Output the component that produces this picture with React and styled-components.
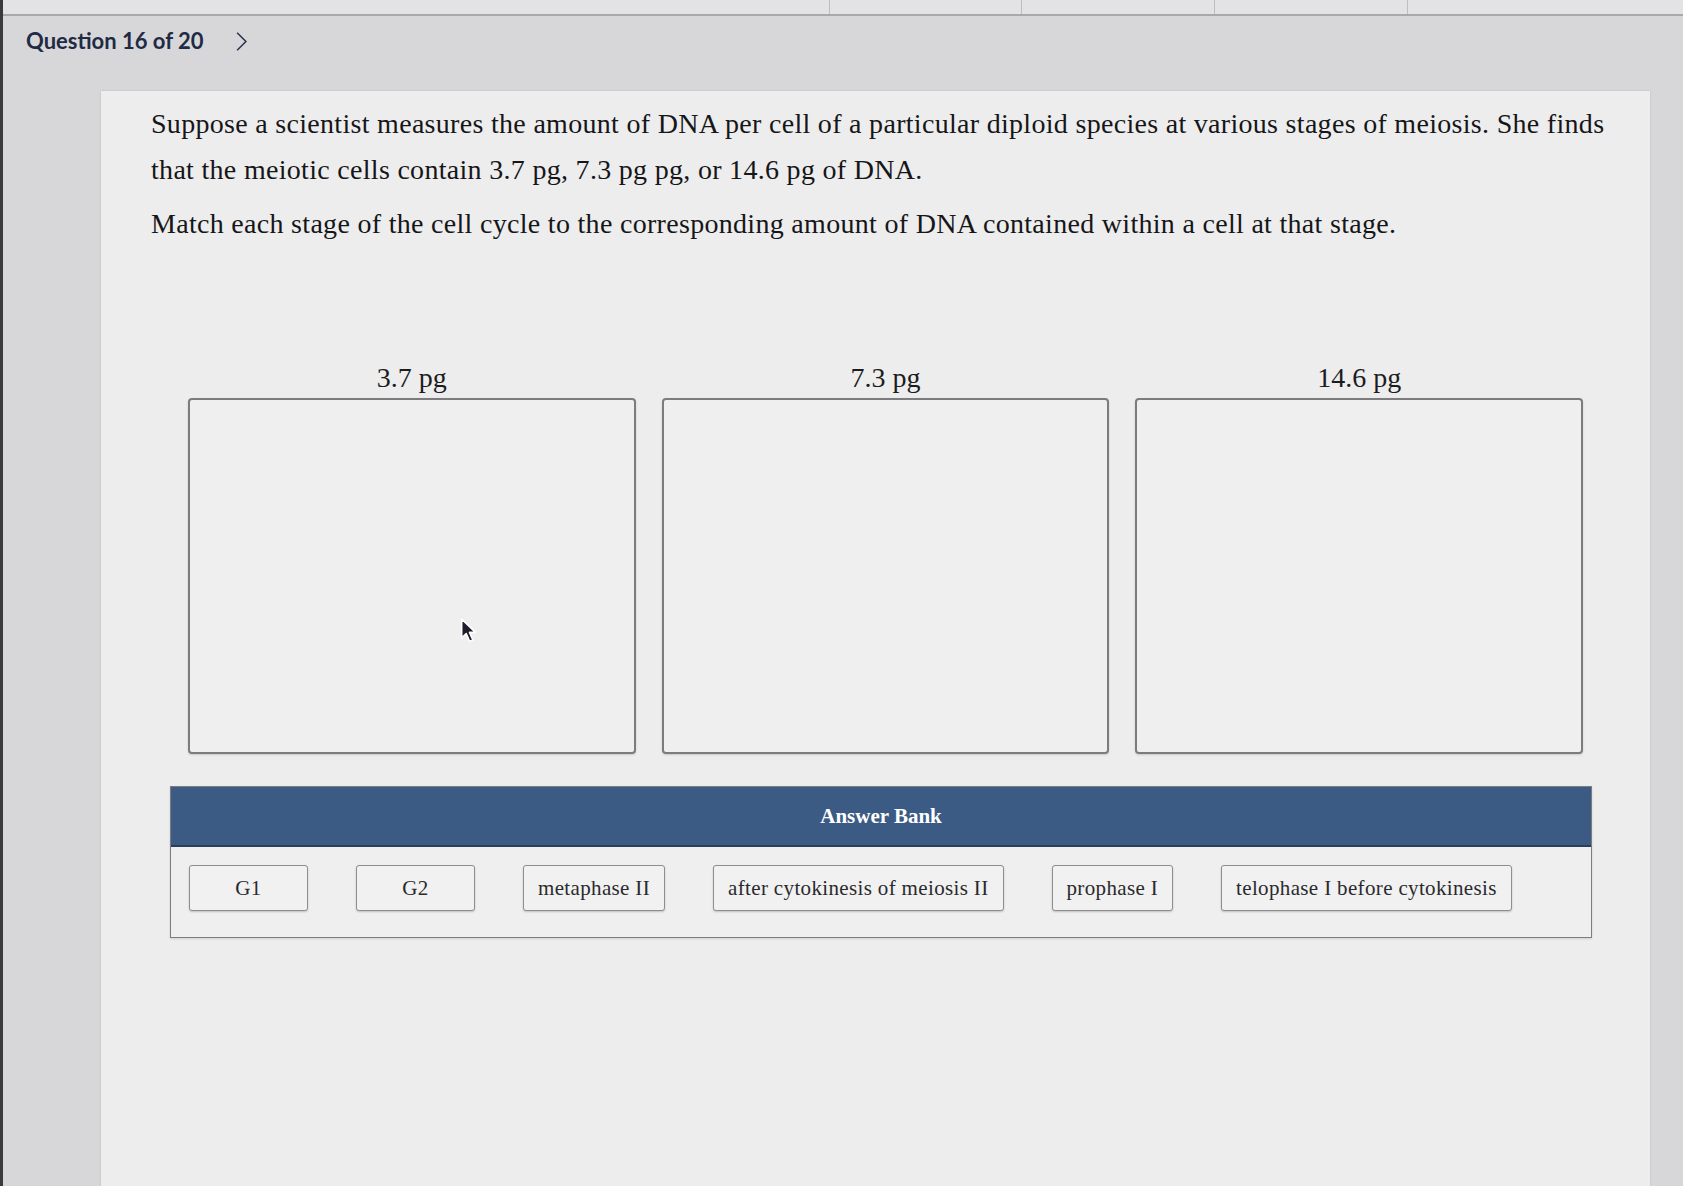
import React from 'react';
import styled, { createGlobalStyle } from 'styled-components';

const GlobalStyle = createGlobalStyle`
  html, body {
    margin: 0;
    padding: 0;
    background: #d7d7d9;
  }
  #root {
    min-height: 1186px;
  }
`;

const stages = [
  'G1',
  'G2',
  'metaphase II',
  'after cytokinesis of meiosis II',
  'prophase I',
  'telophase I before cytokinesis',
];

const targets = ['3.7 pg', '7.3 pg', '14.6 pg'];

function Cursor() {
  return (
    <svg width="18" height="28" viewBox="0 0 16 24">
      <path
        d="M1.5 1.5 L1.5 18 L5.5 14.2 L8.6 21.2 L11.4 20 L8.4 13.2 L13.8 13.2 Z"
        fill="#1d1d2b"
        stroke="#ffffff"
        strokeWidth="1.4"
        strokeLinejoin="round"
      />
    </svg>
  );
}

function App() {
  return (
    <Page>
      <GlobalStyle />
      <TabStrip>
        <Tab $w={826} />
        <Tab $w={191} />
        <Tab $w={192} />
        <Tab $w={192} />
        <Tab $w={282} $last />
      </TabStrip>

      <QuestionNav>
        <QuestionLabel>Question 16 of 20</QuestionLabel>
        <Chevron viewBox="0 0 14 24">
          <path d="M2 2 L12 12 L2 22" />
        </Chevron>
      </QuestionNav>

      <Panel>
        <Prompt>
          Suppose a scientist measures the amount of DNA per cell of a particular diploid species at various stages of meiosis. She finds that the meiotic cells contain 3.7 pg, 7.3 pg pg, or 14.6 pg of DNA.
        </Prompt>
        <Prompt $gap>
          Match each stage of the cell cycle to the corresponding amount of DNA contained within a cell at that stage.
        </Prompt>

        <TargetRow>
          {targets.map((t, i) => (
            <Target key={t}>
              <TargetLabel>{t}</TargetLabel>
              <DropBox>
                {i === 0 && (
                  <CursorSpot>
                    <Cursor />
                  </CursorSpot>
                )}
              </DropBox>
            </Target>
          ))}
        </TargetRow>

        <Bank>
          <BankHeader>Answer Bank</BankHeader>
          <BankBody>
            {stages.map((s) => (
              <Chip key={s}>{s}</Chip>
            ))}
          </BankBody>
        </Bank>
      </Panel>
    </Page>
  );
}

export default App;

const Page = styled.div`
  min-height: 1186px;
  background: #d7d7d9;
  border-left: 3px solid #3a3a3c;
  box-sizing: border-box;
  overflow: hidden;
`;

const TabStrip = styled.div`
  display: flex;
  height: 14px;
  background: #e3e3e5;
  border-bottom: 2px solid #a9a9ab;
`;

const Tab = styled.div`
  width: ${(p) => p.$w}px;
  flex: ${(p) => (p.$last ? '1' : 'none')};
  border-right: ${(p) => (p.$last ? 'none' : '1px solid #bdbdc0')};
`;

const QuestionNav = styled.div`
  display: flex;
  align-items: center;
  gap: 31px;
  height: 48px;
  padding-left: 23px;
`;

const QuestionLabel = styled.span`
  font-family: Lato, "Open Sans", sans-serif;
  font-weight: 700;
  font-size: 22px;
  color: #1f2b45;
`;

const Chevron = styled.svg`
  width: 13px;
  height: 21px;
  fill: none;
  stroke: #2a3550;
  stroke-width: 1.8;
  margin-top: 2px;
`;

const Panel = styled.div`
  margin: 27px 0 0 98px;
  width: 1549px;
  min-height: 1100px;
  background: #ededee;
  box-shadow: 0 0 2px rgba(0, 0, 0, 0.12);
  padding: 10px 25px 0 50px;
  box-sizing: border-box;
`;

const Prompt = styled.p`
  margin: ${(p) => (p.$gap ? '8px 0 0' : '0')};
  font-family: "Liberation Serif", "Times New Roman", serif;
  font-size: 28px;
  letter-spacing: 0.3px;
  line-height: 46px;
  color: #161618;
`;

const TargetRow = styled.div`
  display: grid;
  grid-template-columns: repeat(3, 1fr);
  gap: 26px;
  margin: 115px 42px 0 37px;
`;

const Target = styled.div`
  display: flex;
  flex-direction: column;
  align-items: center;
  gap: 4px;
`;

const TargetLabel = styled.div`
  font-family: "Liberation Serif", "Times New Roman", serif;
  font-size: 28px;
  line-height: 32px;
  color: #1c1c1e;
`;

const DropBox = styled.div`
  position: relative;
  width: 100%;
  height: 356px;
  box-sizing: border-box;
  border: 2px solid #7c7c7e;
  border-radius: 4px;
  background: #efeff0;
  box-shadow: 0 1px 2px rgba(0, 0, 0, 0.15);
`;

const CursorSpot = styled.div`
  position: absolute;
  left: 270px;
  top: 217px;
`;

const Bank = styled.div`
  margin: 32px 33px 0 19px;
  border: 1px solid #7d7d80;
  box-shadow: 0 1px 2px rgba(0, 0, 0, 0.12);
`;

const BankHeader = styled.div`
  height: 58px;
  display: flex;
  align-items: center;
  justify-content: center;
  background: #3b5b84;
  border-bottom: 2px solid #2a3f5c;
  color: #ffffff;
  font-family: "Liberation Serif", "Times New Roman", serif;
  font-weight: 700;
  font-size: 21px;
`;

const BankBody = styled.div`
  display: flex;
  align-items: center;
  gap: 48px;
  padding: 18px 18px 26px;
  background: #efeff0;
`;

const Chip = styled.div`
  min-width: 119px;
  height: 46px;
  box-sizing: border-box;
  padding: 0 14px;
  display: flex;
  align-items: center;
  justify-content: center;
  background: #f1f1f2;
  border: 1px solid #8e8e91;
  border-radius: 3px;
  box-shadow: 0 1px 2px rgba(0, 0, 0, 0.2);
  font-family: "Liberation Serif", "Times New Roman", serif;
  font-size: 21px;
  letter-spacing: 0.35px;
  color: #2a2a2c;
  white-space: nowrap;
`;
